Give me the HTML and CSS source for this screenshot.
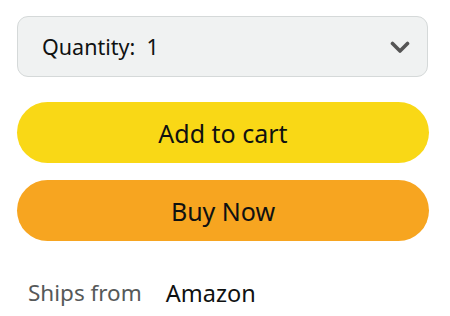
FILE: index.html
```html
<!DOCTYPE html>
<html>
<head>
<meta charset="utf-8">
<link rel="stylesheet" href="styles.css">
</head>
<body>
<div class="panel">
  <div class="select">
    <span class="select-label">Quantity:&nbsp; 1</span>
    <svg class="chev" width="20" height="13" viewBox="0 0 20 13"><path d="M2.5 2.5 L10 10 L17.5 2.5" fill="none" stroke="#555" stroke-width="3.6" stroke-linecap="round" stroke-linejoin="round"/></svg>
  </div>
  <div class="btn btn-cart">Add to cart</div>
  <div class="btn btn-buy">Buy Now</div>
  <div class="ships">
    <span class="ships-label">Ships from</span>
    <span class="ships-value">Amazon</span>
  </div>
</div>
</body>
</html>
```
FILE: styles.css
```css
* { box-sizing: border-box; }
html, body { margin: 0; padding: 0; background: #fff; }
body { font-family: "Noto Sans", "Open Sans", sans-serif; color: #0f1111; }
.panel {
  width: 412px;
  margin: 16px 0 0 17px;
  display: flex;
  flex-direction: column;
}
.select {
  height: 61px;
  width: 411px;
  border: 1.5px solid #d5d9d9;
  border-radius: 11px;
  background: #f0f2f2;
  display: flex;
  align-items: center;
  justify-content: space-between;
  padding: 0 17px 0 24px;
  font-size: 21.5px;
  font-weight: 400;
}
.chev { display: block; margin-top: 1px; }
.btn {
  height: 61px;
  border-radius: 31px;
  display: flex;
  align-items: center;
  justify-content: center;
  font-size: 25px;
  font-weight: 400;
  color: #0f1111;
}
.btn-cart { background: #f9d816; margin-top: 25px; }
.btn-buy { background: #f7a520; margin-top: 17px; }
.ships {
  margin-top: 36px;
  padding-left: 11px;
  display: flex;
  gap: 24px;
  font-size: 22.5px;
  font-weight: 400;
}
.ships-label { color: #565959; }
.ships-value { color: #0f1111; font-size: 23.5px; }
```
